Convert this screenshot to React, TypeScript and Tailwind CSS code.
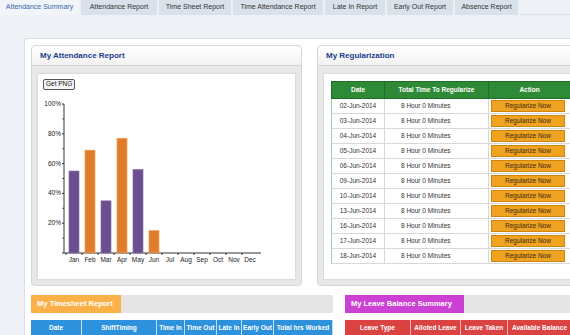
import React from 'react';

const tabs = [
  { label: 'Attendance Summary', w: 'w-[81px]', active: true },
  { label: 'Attendance Report', w: 'w-[78px]' },
  { label: 'Time Sheet Report', w: 'w-[74px]' },
  { label: 'Time Attendance Report', w: 'w-[92px]' },
  { label: 'Late In Report', w: 'w-[62px]' },
  { label: 'Early Out Report', w: 'w-[68px]' },
  { label: 'Absence Report', w: 'w-[65px]' },
];

const dates = ['02', '03', '04', '05', '06', '09', '10', '13', '16', '17', '18'];

const months = ['Jan', 'Feb', 'Mar', 'Apr', 'May', 'Jun', 'Jul', 'Aug', 'Sep', 'Oct', 'Nov', 'Dec'];
const values = [55, 69, 35, 77, 56, 15];

function AttendanceChart() {
  // coordinates are relative to the white card
  const x0 = 26;
  const y0 = 179;
  const scale = 1.49;
  return (
    <svg width="256" height="207" className="block">
      <g fontFamily="Liberation Sans, sans-serif" fontSize="6.5" fill="#222">
        <line x1={x0} y1={30} x2={x0} y2={y0} stroke="#333" strokeWidth="1" />
        <line x1={x0} y1={y0} x2={223} y2={y0} stroke="#333" strokeWidth="1" />
        {[0, 1, 2, 3, 4, 5].map((i) => (
          <g key={i}>
            <line x1={x0 - 2} y1={y0 - i * 29.8} x2={x0} y2={y0 - i * 29.8} stroke="#333" />
            <line x1={x0 - 1.5} y1={y0 - i * 29.8 - 14.9} x2={x0} y2={y0 - i * 29.8 - 14.9} stroke="#333" />
            {i > 0 && (
              <text x={x0 - 3} y={y0 - i * 29.8 + 2} textAnchor="end">
                {i * 20}%
              </text>
            )}
          </g>
        ))}
        {values.map((v, i) => (
          <rect
            key={i}
            x={x0 + 5 + i * 16}
            y={y0 - v * scale}
            width="10"
            height={v * scale}
            fill={i % 2 === 0 ? '#6c4d8e' : '#e07d2c'}
            stroke={i % 2 === 0 ? '#8a70a8' : '#ef9d55'}
            strokeWidth="0.7"
          />
        ))}
        {months.map((m, i) => (
          <g key={m}>
            <line x1={x0 + 2 + i * 16} y1={y0} x2={x0 + 2 + i * 16} y2={y0 + 2} stroke="#333" />
            <text x={x0 + 10 + i * 16} y={y0 + 9} textAnchor="middle">
              {m}
            </text>
          </g>
        ))}
      </g>
    </svg>
  );
}

function PanelHeader({ title }: { title: string }) {
  return (
    <div className="h-[20px] bg-gradient-to-b from-white to-[#f2f2f2] border-b border-[#d2d2d2] rounded-t-[4px] flex items-center pl-[8px]">
      <span className="text-[8px] font-bold text-[#203c8c]">{title}</span>
    </div>
  );
}

export default function App() {
  return (
    <div className="w-[570px] h-[335px] overflow-hidden bg-[#eef2f6] font-['Liberation_Sans',sans-serif] text-[7px] text-[#222]">
      {/* tab strip */}
      <div className="flex h-[15px]">
        {tabs.map((t) => (
          <div
            key={t.label}
            className={`${t.w} shrink-0 flex items-center justify-center border-r-2 border-[#eef2f6] ${
              t.active ? 'bg-[#f1f5f9] text-[#3767ad]' : 'bg-[#d9e2eb] text-[#333]'
            }`}
          >
            {t.label}
          </div>
        ))}
        <div className="flex-1 bg-[#eef2f6] border-b border-[#d9e2eb]" />
      </div>

      {/* content */}
      <div className="ml-[24px] mt-[23px] w-[560px] h-[300px] bg-white border-l border-t border-[#d8dee6] rounded-tl-[3px] pl-[6px] pt-[6px]">
        <div className="flex gap-[15px]">
          {/* attendance report */}
          <div className="w-[271px] h-[241px] shrink-0 bg-[#e8e8e8] border border-[#d6d6d6] rounded-[4px]">
            <PanelHeader title="My Attendance Report" />
            <div className="relative mx-[5px] mt-[7px] h-[207px] bg-white border border-[#dcdcdc] shadow-[0_0_1px_#ccc]">
              <button className="absolute left-[5px] top-[5px] h-[11px] px-[2px] border border-[#555] rounded-[2px] bg-[#f4f4f4] text-[6.5px] leading-none text-[#111]">
                Get PNG
              </button>
              <AttendanceChart />
            </div>
          </div>

          {/* regularization */}
          <div className="w-[270px] h-[241px] shrink-0 bg-[#e8e8e8] border border-[#d6d6d6] rounded-[4px]">
            <PanelHeader title="My Regularization" />
            <div className="mx-[5px] mt-[7px] h-[207px] bg-white border border-[#dcdcdc] pl-[7px] pt-[7px]">
              <table className="border-collapse border border-[#9fd2a2] text-[6.5px] text-[#333]">
                <thead>
                  <tr className="h-[17px] bg-[#2f8a37] text-white font-bold">
                    <th className="w-[53px] border border-[#1f6d27] font-bold">Date</th>
                    <th className="w-[104px] border border-[#1f6d27] font-bold">Total Time To Regularize</th>
                    <th className="w-[82px] border border-[#1f6d27] font-bold">Action</th>
                  </tr>
                </thead>
                <tbody>
                  {dates.map((d) => (
                    <tr key={d} className="h-[15px] border-b border-[#d8d8d8]">
                      <td className="text-center border-r border-[#d8d8d8]">{d}-Jun-2014</td>
                      <td className="pl-[16px] border-r border-[#d8d8d8]">8 Hour 0 Minutes</td>
                      <td className="pl-[2px]">
                        <div className="w-[74px] h-[12px] bg-[#f0a221] border border-[#d08410] flex items-center justify-center text-[#3a2a10]">
                          Regularize Now
                        </div>
                      </td>
                    </tr>
                  ))}
                </tbody>
              </table>
            </div>
          </div>
        </div>

        <div className="flex gap-[12px] mt-[9px]">
          {/* timesheet */}
          <div className="w-[302px] shrink-0">
            <div className="flex h-[18px] bg-[#e5e5e5]">
              <div className="w-[90px] bg-[#fbb147] text-white font-bold text-[7.5px] flex items-center pl-[6px]">
                My Timesheet Report
              </div>
            </div>
            <div className="mt-[7px] flex h-[16px] bg-[#2d92db] text-white font-bold text-[6.5px]">
              {[
                ['Date', 'w-[51px]'],
                ['ShiftTiming', 'w-[75px]'],
                ['Time In', 'w-[28px]'],
                ['Time Out', 'w-[32px]'],
                ['Late In', 'w-[25px]'],
                ['Early Out', 'w-[32px]'],
                ['Total hrs Worked', 'w-[59px]'],
              ].map(([l, w]) => (
                <div key={l} className={`${w} shrink-0 border-r border-[#bfe0f7] flex items-center justify-center whitespace-nowrap`}>
                  {l}
                </div>
              ))}
            </div>
          </div>

          {/* leave balance */}
          <div className="w-[240px] shrink-0">
            <div className="flex h-[18px] bg-[#e5e5e5]">
              <div className="w-[119px] bg-[#cc40d4] text-white font-bold text-[7.5px] flex items-center pl-[6px]">
                My Leave Balance Summary
              </div>
            </div>
            <div className="mt-[7px] flex h-[16px] bg-[#db4343] text-white font-bold text-[6.5px]">
              {[
                ['Leave Type', 'w-[66px]'],
                ['Alloted Leave', 'w-[50px]'],
                ['Leave Taken', 'w-[47px]'],
                ['Available Balance', 'w-[64px]'],
              ].map(([l, w]) => (
                <div key={l} className={`${w} shrink-0 border-r border-[#f2b0b0] flex items-center justify-center whitespace-nowrap`}>
                  {l}
                </div>
              ))}
            </div>
          </div>
        </div>
      </div>
    </div>
  );
}
